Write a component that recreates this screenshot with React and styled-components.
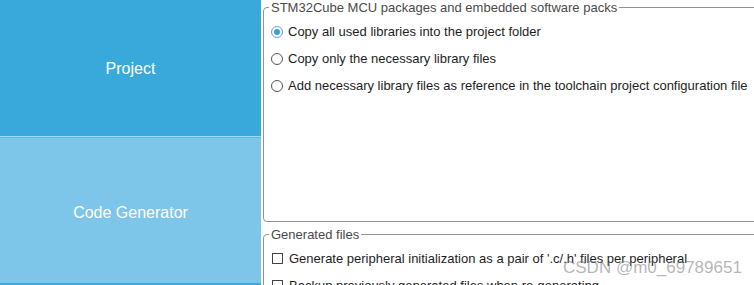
import React from "react";
import styled, { createGlobalStyle } from "styled-components";

const GlobalStyle = createGlobalStyle`
  html, body {
    margin: 0;
    padding: 0;
    background: #fff;
    overflow: hidden;
  }
  body {
    font-family: "Liberation Sans", Arial, sans-serif;
  }
`;

const libraryOptions = [
  { label: "Copy all used libraries into the project folder", checked: true },
  { label: "Copy only the necessary library files", checked: false },
  {
    label:
      "Add necessary library files as reference in the toolchain project configuration file",
    checked: false,
  },
];

const generatedOptions = [
  "Generate peripheral initialization as a pair of '.c/.h' files per peripheral",
  "Backup previously generated files when re-generating",
];

const App = () => {
  return (
    <>
      <GlobalStyle />
      <Page>
        <SideNav>
          <NavTile $active>Project</NavTile>
          <NavTile>Code Generator</NavTile>
        </SideNav>
        <Content>
          <Group $height={222}>
            <Legend>STM32Cube MCU packages and embedded software packs</Legend>
            {libraryOptions.map((opt) => (
              <OptionRow key={opt.label}>
                <Radio $checked={opt.checked} />
                {opt.label}
              </OptionRow>
            ))}
          </Group>
          <Group $top={5} $height={120}>
            <Legend>Generated files</Legend>
            {generatedOptions.map((label) => (
              <OptionRow key={label}>
                <Checkbox />
                {label}
              </OptionRow>
            ))}
          </Group>
        </Content>
        <Watermark>CSDN @m0_69789651</Watermark>
      </Page>
    </>
  );
};

export default App;

const Page = styled.div`
  position: relative;
  display: flex;
  width: 754px;
  height: 285px;
  overflow: hidden;
`;

const SideNav = styled.div`
  display: flex;
  flex-direction: column;
  width: 261px;
  flex-shrink: 0;
  border-bottom: 2px solid #39a9db;
`;

const NavTile = styled.div`
  display: flex;
  align-items: center;
  justify-content: center;
  color: #fff;
  font-size: 16px;
  background: ${(p) => (p.$active ? "#39a9db" : "#7dc5e9")};
  height: ${(p) => (p.$active ? "137px" : "auto")};
  flex: ${(p) => (p.$active ? "0 0 auto" : "1 1 auto")};
  border-bottom: ${(p) => (p.$active ? "1px solid #a6d8f1" : "none")};
  border-top: ${(p) => (p.$active ? "none" : "1px solid #5db6e3")};
  padding-top: ${(p) => (p.$active ? "2px" : "4px")};
  box-sizing: border-box;
`;

const Content = styled.div`
  flex: 1;
  display: flex;
  flex-direction: column;
  padding-left: 2px;
  margin-right: -12px;
  min-width: 0;
`;

const Group = styled.fieldset`
  box-sizing: border-box;
  margin: ${(p) => p.$top || 0}px 0 0 0;
  padding: 3px 0 0 4px;
  height: ${(p) => p.$height}px;
  flex-shrink: 0;
  border: 1px solid #8f9193;
  border-radius: 4px;
  min-width: 0;
`;

const Legend = styled.legend`
  padding: 0 2px;
  margin-left: 1px;
  font-size: 13px;
  line-height: 15px;
  color: #4a4a4a;
`;

const OptionRow = styled.div`
  display: flex;
  align-items: center;
  height: 27px;
  font-size: 13px;
  color: #1e1e1e;
  white-space: nowrap;
`;

const Radio = styled.span`
  position: relative;
  box-sizing: border-box;
  width: 12px;
  height: 12px;
  margin: 0 5px 0 3px;
  border-radius: 50%;
  border: 1px solid ${(p) => (p.$checked ? "#5aa6dc" : "#555")};
  background: #fff;
  flex-shrink: 0;

  &::after {
    content: "";
    display: ${(p) => (p.$checked ? "block" : "none")};
    position: absolute;
    left: 2px;
    top: 2px;
    width: 6px;
    height: 6px;
    border-radius: 50%;
    background: #3a9de0;
  }
`;

const Checkbox = styled.span`
  box-sizing: border-box;
  width: 11px;
  height: 11px;
  margin: 0 6px 0 4px;
  border: 1px solid #444;
  background: #fff;
  flex-shrink: 0;
`;

const Watermark = styled.div`
  position: absolute;
  left: 563px;
  top: 258px;
  font-size: 17px;
  color: rgba(120, 120, 120, 0.55);
  white-space: nowrap;
  pointer-events: none;
`;
